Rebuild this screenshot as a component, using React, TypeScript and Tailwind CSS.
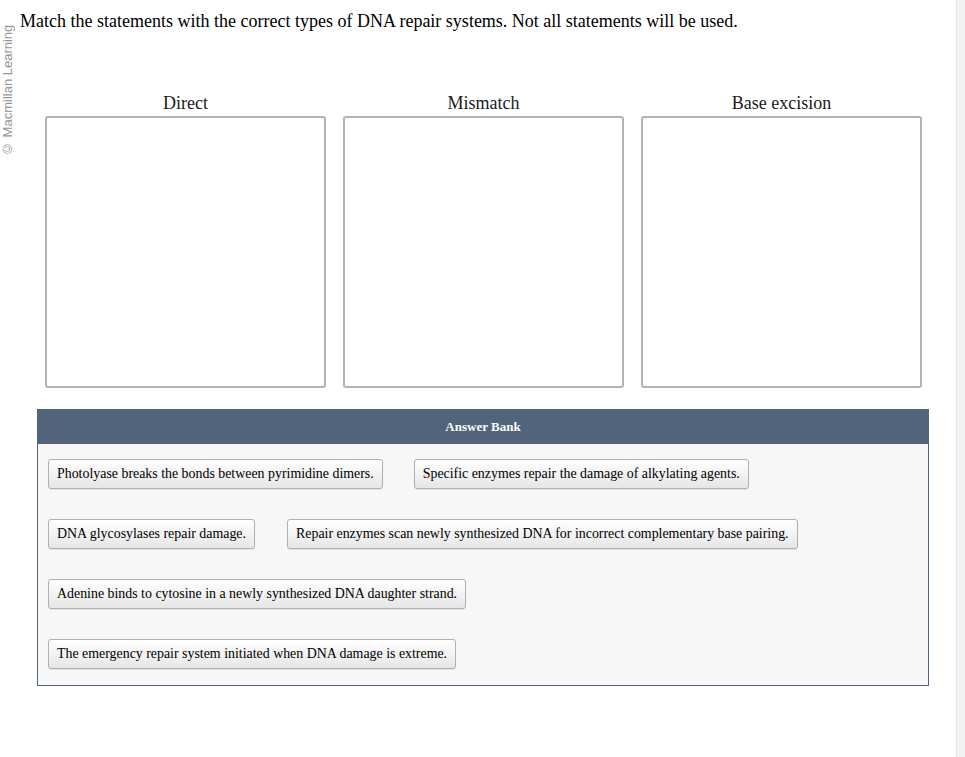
import React from "react";

const serif = { fontFamily: '"Liberation Serif", "Times New Roman", serif' };

function Chip({ children }: { children: React.ReactNode }) {
  return (
    <div
      className="h-[30px] px-[8px] flex items-center border border-[#b0b0b0] rounded-[3px] bg-gradient-to-b from-white to-[#e6e6e6] text-[13.9px] text-black whitespace-nowrap shadow-[0_1px_1px_rgba(0,0,0,0.08)]"
      style={serif}
    >
      {children}
    </div>
  );
}

export default function App() {
  const cols = ["Direct", "Mismatch", "Base excision"];
  return (
    <div className="flex w-[965px] h-[757px] bg-white overflow-hidden" style={serif}>
      <div className="w-[15px] flex justify-center pt-[9px]">
        <div
          className="[writing-mode:vertical-rl] rotate-180 text-[13px] text-[#959595] leading-[14px] whitespace-nowrap h-[147px]"
          style={{ fontFamily: '"Liberation Sans", Arial, sans-serif' }}
        >
          © Macmillan Learning
        </div>
      </div>
      <div className="flex-1 flex flex-col">
        <div className="pl-[5px] pt-[11px] text-[18px] leading-[20px] text-black">
          Match the statements with the correct types of DNA repair systems. Not all statements will be used.
        </div>
        <div className="flex gap-[17px] ml-[30px] mt-[62px]">
          {cols.map((c) => (
            <div key={c} className="w-[281px] flex flex-col items-center">
              <div className="text-[18px] leading-[20px] text-[#1a1a1a]">{c}</div>
              <div className="mt-[3px] w-[281px] h-[272px] border-2 border-[#b3b3b3] rounded-[3px] bg-white" />
            </div>
          ))}
        </div>
        <div className="ml-[22px] mt-[21px] w-[892px] h-[277px] border border-[#51647b] bg-[#f7f7f7] flex flex-col">
          <div className="h-[34px] bg-[#51647b] flex items-center justify-center text-white font-bold text-[13px]">
            Answer Bank
          </div>
          <div className="flex flex-col gap-[30px] pl-[10px] pt-[15px]">
            <div className="flex gap-[31px]">
              <Chip>Photolyase breaks the bonds between pyrimidine dimers.</Chip>
              <Chip>Specific enzymes repair the damage of alkylating agents.</Chip>
            </div>
            <div className="flex gap-[32px]">
              <Chip>DNA glycosylases repair damage.</Chip>
              <Chip>Repair enzymes scan newly synthesized DNA for incorrect complementary base pairing.</Chip>
            </div>
            <div className="flex">
              <Chip>Adenine binds to cytosine in a newly synthesized DNA daughter strand.</Chip>
            </div>
            <div className="flex">
              <Chip>The emergency repair system initiated when DNA damage is extreme.</Chip>
            </div>
          </div>
        </div>
      </div>
      <div className="w-[9px] h-full bg-[#f1f1f1] border-l border-[#e6e6e6]" />
    </div>
  );
}
